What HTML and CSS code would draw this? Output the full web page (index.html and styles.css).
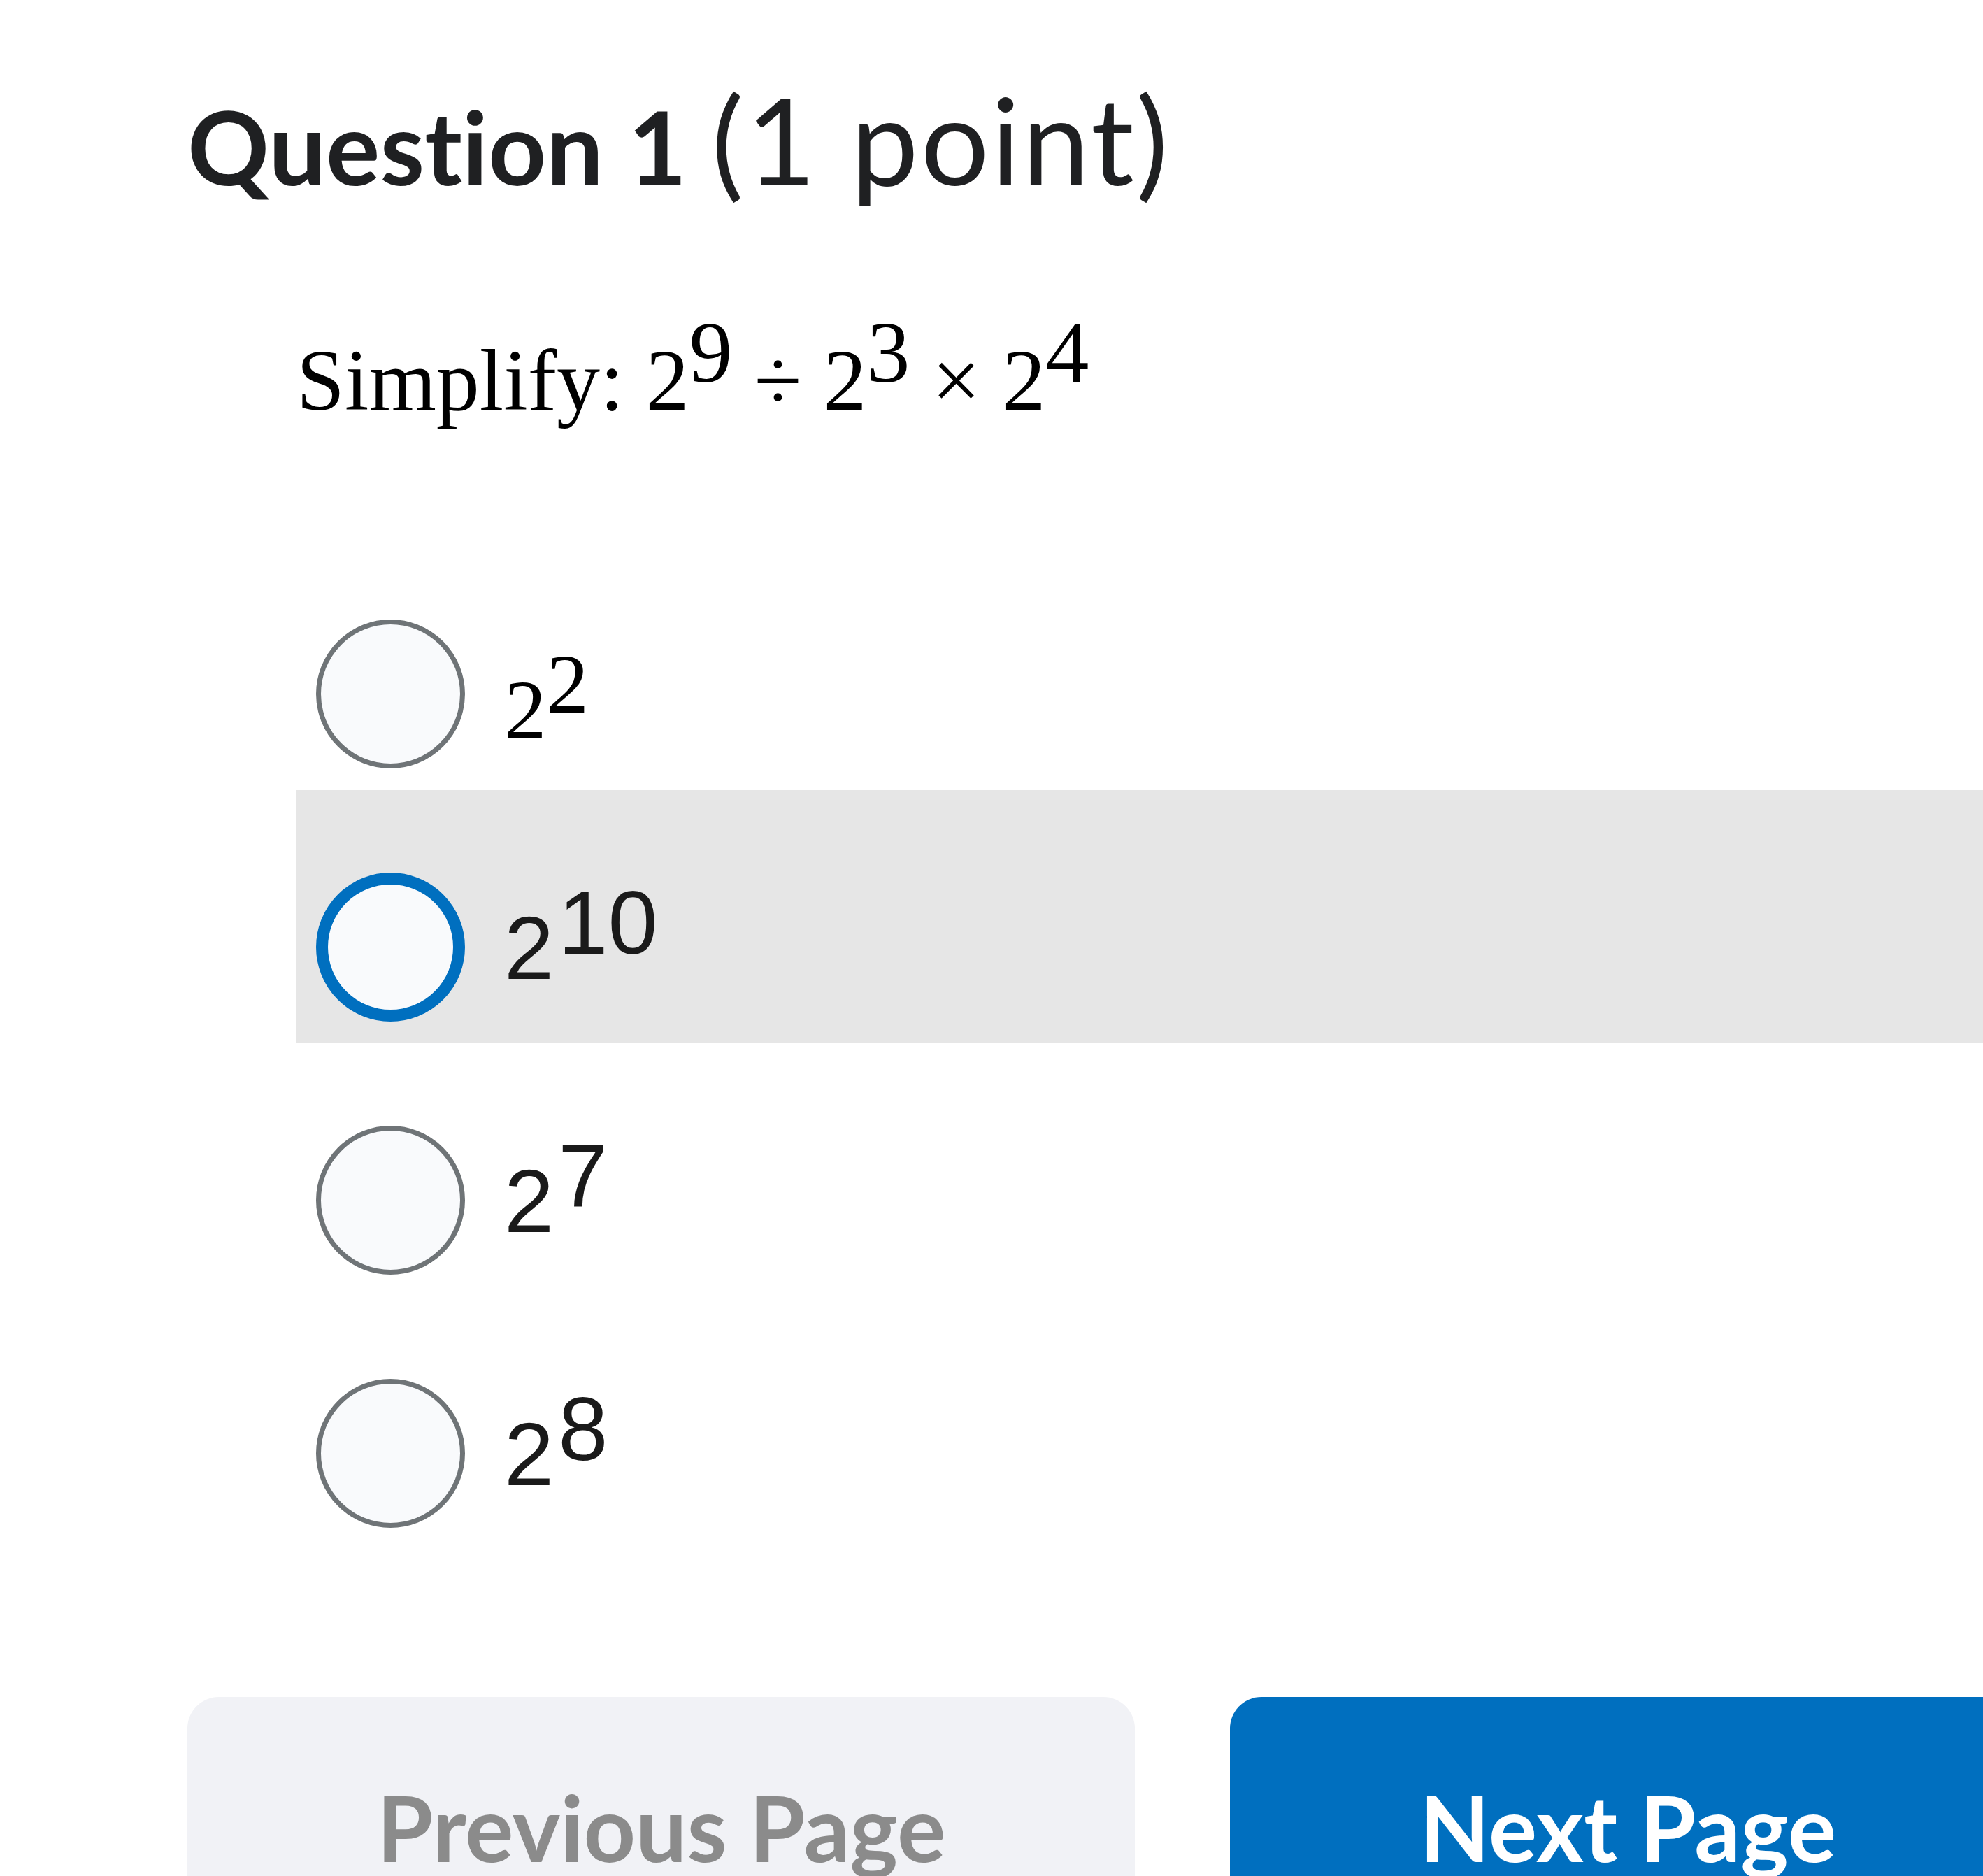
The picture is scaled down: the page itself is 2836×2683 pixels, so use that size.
FILE: index.html
```html
<!DOCTYPE html>
<html lang="en">
<head>
<meta charset="utf-8">
<title>Question 1</title>
<link rel="stylesheet" href="styles.css">
</head>
<body>
<main class="page">
  <h1 class="q-title"><span class="q-num">Question 1</span> <span class="q-points">(1 point)</span></h1>
  <p class="prompt">Simplify: 2<span class="sup">9</span> ÷ 2<span class="sup">3</span> × 2<span class="sup">4</span></p>
  <ul class="options">
    <li class="option">
      <span class="radio"></span>
      <span class="label serif">2<span class="sup">2</span></span>
    </li>
    <li class="option option-hover">
      <span class="radio radio-focus"></span>
      <span class="label">2<span class="sup">10</span></span>
    </li>
    <li class="option">
      <span class="radio"></span>
      <span class="label">2<span class="sup">7</span></span>
    </li>
    <li class="option">
      <span class="radio"></span>
      <span class="label">2<span class="sup">8</span></span>
    </li>
  </ul>
  <div class="nav">
    <button class="btn btn-prev" type="button">Previous Page</button>
    <button class="btn btn-next" type="button">Next Page</button>
  </div>
</main>
</body>
</html>
```
FILE: styles.css
```css
html, body {
  margin: 0;
  padding: 0;
  background: #ffffff;
  overflow: hidden;
}

.page {
  padding: 122px 0 0 268px;
  font-family: Lato, "Liberation Sans", sans-serif;
}

.q-title {
  margin: 0;
  font-size: 145px;
  line-height: 174px;
  color: #1f2022;
  white-space: nowrap;
  font-variant-ligatures: none;
}

.q-num {
  font-weight: 700;
}

.q-points {
  font-weight: 400;
  font-size: 1.19em;
  line-height: 0;
  letter-spacing: 3px;
}

.prompt {
  margin: 175px 0 0 156px;
  font-family: "Liberation Serif", "Times New Roman", serif;
  font-size: 124px;
  line-height: 1.2;
  color: #000000;
  white-space: nowrap;
}

.sup {
  vertical-align: 40px;
  line-height: 0;
  font-size: 1em;
}

.options {
  list-style: none;
  margin: 148px 0 0 155px;
  padding: 0;
}

.option {
  display: flex;
  align-items: flex-start;
  height: 362px;
  box-sizing: border-box;
  padding: 118px 0 0 29px;
}

.option-hover {
  background: #e6e6e6;
}

.radio {
  flex: none;
  width: 213px;
  height: 213px;
  box-sizing: border-box;
  border-radius: 50%;
  border: 7px solid #6f7477;
  background: #f9fafc;
}

.radio-focus {
  border: 17px solid #006fbf;
}

.label {
  margin: 34px 0 0 56px;
  font-family: "Liberation Sans", Arial, sans-serif;
  font-size: 128px;
  line-height: 1.15;
  color: #1a1a1a;
  white-space: nowrap;
}

.label .sup {
  vertical-align: 36px;
  margin-left: 6px;
}

.label.serif {
  margin-top: 60px;
  font-family: "Liberation Serif", "Times New Roman", serif;
  font-size: 121px;
  color: #000000;
}

.label.serif .sup {
  vertical-align: 37px;
  margin-left: 0;
}

.nav {
  display: flex;
  gap: 136px;
  margin-top: 211px;
}

.btn {
  flex: none;
  border: none;
  border-radius: 45px;
  padding: 108px 271px 60px;
  font-family: Lato, "Liberation Sans", sans-serif;
  font-weight: 700;
  font-size: 130px;
  line-height: 1.2;
  white-space: nowrap;
}

.btn-prev {
  background: #f1f2f6;
  color: #8b8b8b;
}

.btn-next {
  background: #006fbf;
  color: #ffffff;
}
```
